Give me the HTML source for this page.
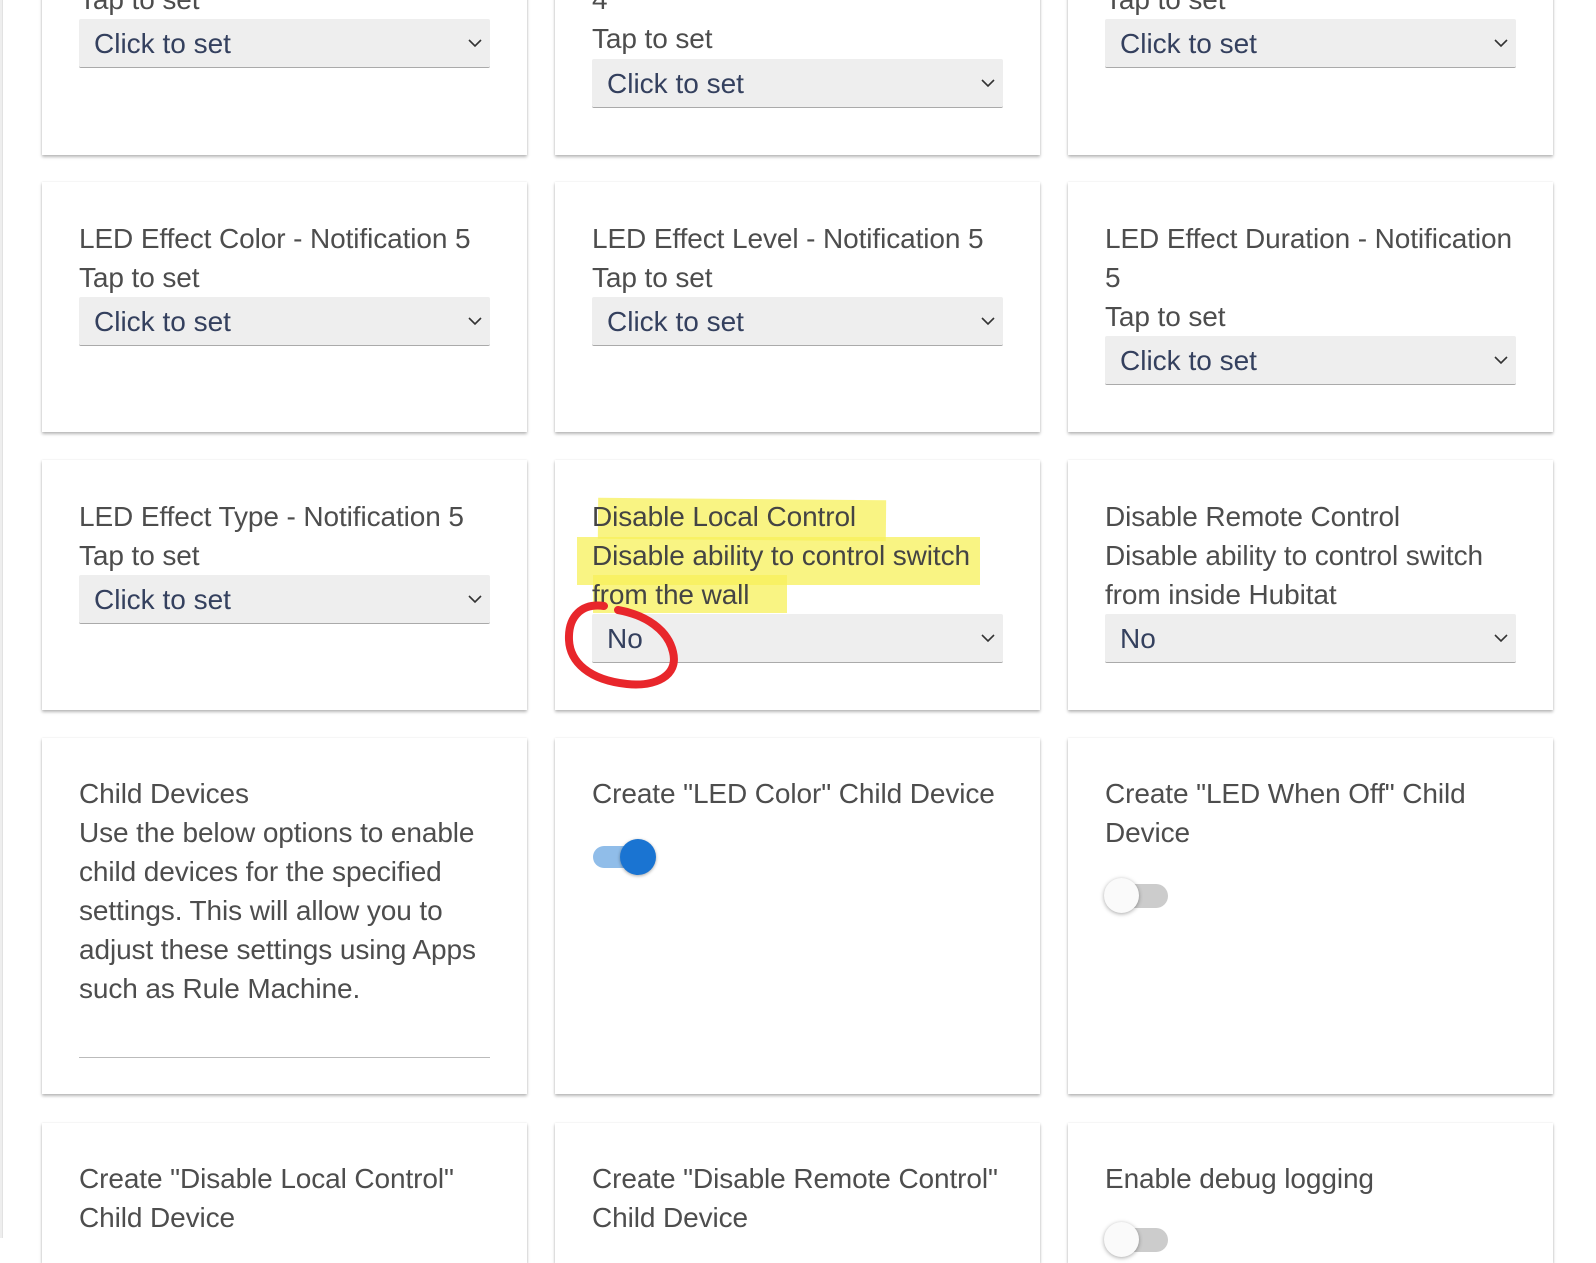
<!DOCTYPE html>
<html><head><meta charset="utf-8"><style>
*{box-sizing:border-box;margin:0;padding:0}
body{width:1596px;height:1238px;overflow:hidden;background:#fff;position:relative;font-family:"Liberation Sans",sans-serif;color:#4d4d4d}
.edge{position:absolute;left:0;top:0;width:3px;height:1238px;background:#eee;border-right:1px solid #e2e2e2}
.card{position:absolute;width:485px;background:#fff;box-shadow:0 2px 3px rgba(0,0,0,.28),0 0 2px rgba(0,0,0,.08)}
.t{position:absolute;font-size:28px;line-height:39px;white-space:nowrap;letter-spacing:-0.1px}
.sel{position:absolute;width:411px;height:49px;background:#eee;border-bottom:1px solid #aaa;border-radius:2px;color:#34405e;font-size:28px;line-height:49px;padding-left:15px}
.sel svg{position:absolute;right:8px;top:20px}
.hl{position:absolute;background:rgba(247,240,90,.75)}
</style></head><body>
<div class="edge"></div>

<!-- row0 -->
<div class="card" style="left:42px;top:-10px;height:165px"></div>
<div class="card" style="left:555px;top:-10px;height:165px"></div>
<div class="card" style="left:1068px;top:-10px;height:165px"></div>
<div class="t" style="left:79px;top:-20px">Tap to set</div>
<div class="sel" style="left:79px;top:19px">Click to set<svg width="14" height="9"><path d="M1 1l6 6 6-6" stroke="#333" stroke-width="1.6" fill="none"/></svg></div>
<div class="t" style="left:592px;top:-20px">4</div>
<div class="t" style="left:592px;top:19px">Tap to set</div>
<div class="sel" style="left:592px;top:59px">Click to set<svg width="14" height="9"><path d="M1 1l6 6 6-6" stroke="#333" stroke-width="1.6" fill="none"/></svg></div>
<div class="t" style="left:1105px;top:-20px">Tap to set</div>
<div class="sel" style="left:1105px;top:19px">Click to set<svg width="14" height="9"><path d="M1 1l6 6 6-6" stroke="#333" stroke-width="1.6" fill="none"/></svg></div>

<!-- row1 -->
<div class="card" style="left:42px;top:182px;height:250px"></div>
<div class="card" style="left:555px;top:182px;height:250px"></div>
<div class="card" style="left:1068px;top:182px;height:250px"></div>
<div class="t" style="left:79px;top:219px">LED Effect Color - Notification 5</div>
<div class="t" style="left:79px;top:258px">Tap to set</div>
<div class="sel" style="left:79px;top:297px">Click to set<svg width="14" height="9"><path d="M1 1l6 6 6-6" stroke="#333" stroke-width="1.6" fill="none"/></svg></div>
<div class="t" style="left:592px;top:219px">LED Effect Level - Notification 5</div>
<div class="t" style="left:592px;top:258px">Tap to set</div>
<div class="sel" style="left:592px;top:297px">Click to set<svg width="14" height="9"><path d="M1 1l6 6 6-6" stroke="#333" stroke-width="1.6" fill="none"/></svg></div>
<div class="t" style="left:1105px;top:219px">LED Effect Duration - Notification</div>
<div class="t" style="left:1105px;top:258px">5</div>
<div class="t" style="left:1105px;top:297px">Tap to set</div>
<div class="sel" style="left:1105px;top:336px">Click to set<svg width="14" height="9"><path d="M1 1l6 6 6-6" stroke="#333" stroke-width="1.6" fill="none"/></svg></div>

<!-- row2 -->
<div class="card" style="left:42px;top:460px;height:250px"></div>
<div class="card" style="left:555px;top:460px;height:250px"></div>
<div class="card" style="left:1068px;top:460px;height:250px"></div>
<div class="t" style="left:79px;top:497px">LED Effect Type - Notification 5</div>
<div class="t" style="left:79px;top:536px">Tap to set</div>
<div class="sel" style="left:79px;top:575px">Click to set<svg width="14" height="9"><path d="M1 1l6 6 6-6" stroke="#333" stroke-width="1.6" fill="none"/></svg></div>

<div class="hl" style="left:598px;top:499px;width:288px;height:41px;transform:rotate(0.5deg)"></div>
<div class="hl" style="left:577px;top:537px;width:403px;height:48px"></div>
<div class="hl" style="left:593px;top:575px;width:194px;height:38px"></div>
<div class="t" style="left:592px;top:497px;color:#444">Disable Local Control</div>
<div class="t" style="left:592px;top:536px;color:#444">Disable ability to control switch</div>
<div class="t" style="left:592px;top:575px;color:#444">from the wall</div>
<div class="sel" style="left:592px;top:614px">No<svg width="14" height="9"><path d="M1 1l6 6 6-6" stroke="#333" stroke-width="1.6" fill="none"/></svg></div>
<svg style="position:absolute;left:562px;top:598px" width="130" height="96"><path d="M42 8C20 5 6 18 7 42c1 22 20 40 58 44 28 3 52-8 46-32C106 32 84 17 56 12" stroke="#e8262b" stroke-width="8" fill="none" stroke-linecap="round"/></svg>

<div class="t" style="left:1105px;top:497px">Disable Remote Control</div>
<div class="t" style="left:1105px;top:536px">Disable ability to control switch</div>
<div class="t" style="left:1105px;top:575px">from inside Hubitat</div>
<div class="sel" style="left:1105px;top:614px">No<svg width="14" height="9"><path d="M1 1l6 6 6-6" stroke="#333" stroke-width="1.6" fill="none"/></svg></div>

<!-- row3 -->
<div class="card" style="left:42px;top:738px;height:356px"></div>
<div class="card" style="left:555px;top:738px;height:356px"></div>
<div class="card" style="left:1068px;top:738px;height:356px"></div>
<div class="t" style="left:79px;top:774px">Child Devices</div>
<div class="t" style="left:79px;top:813px">Use the below options to enable</div>
<div class="t" style="left:79px;top:852px">child devices for the specified</div>
<div class="t" style="left:79px;top:891px">settings. This will allow you to</div>
<div class="t" style="left:79px;top:930px">adjust these settings using Apps</div>
<div class="t" style="left:79px;top:969px">such as Rule Machine.</div>
<div style="position:absolute;left:79px;top:1057px;width:411px;height:1px;background:#bbb"></div>

<div class="t" style="left:592px;top:774px">Create "LED Color" Child Device</div>
<div style="position:absolute;left:593px;top:846px;width:54px;height:22px;border-radius:11px;background:#90bde9"></div>
<div style="position:absolute;left:620px;top:839px;width:36px;height:36px;border-radius:50%;background:#1a74d2;box-shadow:0 1px 3px rgba(0,0,0,.35)"></div>

<div class="t" style="left:1105px;top:774px">Create "LED When Off" Child</div>
<div class="t" style="left:1105px;top:813px">Device</div>
<div style="position:absolute;left:1110px;top:884px;width:58px;height:24px;border-radius:12px;background:#ccc"></div>
<div style="position:absolute;left:1104px;top:878px;width:35px;height:35px;border-radius:50%;background:#fafafa;box-shadow:0 1px 4px rgba(0,0,0,.35)"></div>

<!-- row4 -->
<div class="card" style="left:42px;top:1123px;height:140px"></div>
<div class="card" style="left:555px;top:1123px;height:140px"></div>
<div class="card" style="left:1068px;top:1123px;height:140px"></div>
<div class="t" style="left:79px;top:1159px">Create "Disable Local Control"</div>
<div class="t" style="left:79px;top:1198px">Child Device</div>
<div class="t" style="left:592px;top:1159px">Create "Disable Remote Control"</div>
<div class="t" style="left:592px;top:1198px">Child Device</div>
<div class="t" style="left:1105px;top:1159px">Enable debug logging</div>
<div style="position:absolute;left:1110px;top:1228px;width:58px;height:24px;border-radius:12px;background:#ccc"></div>
<div style="position:absolute;left:1104px;top:1222px;width:35px;height:35px;border-radius:50%;background:#fafafa;box-shadow:0 1px 4px rgba(0,0,0,.35)"></div>
</body></html>
